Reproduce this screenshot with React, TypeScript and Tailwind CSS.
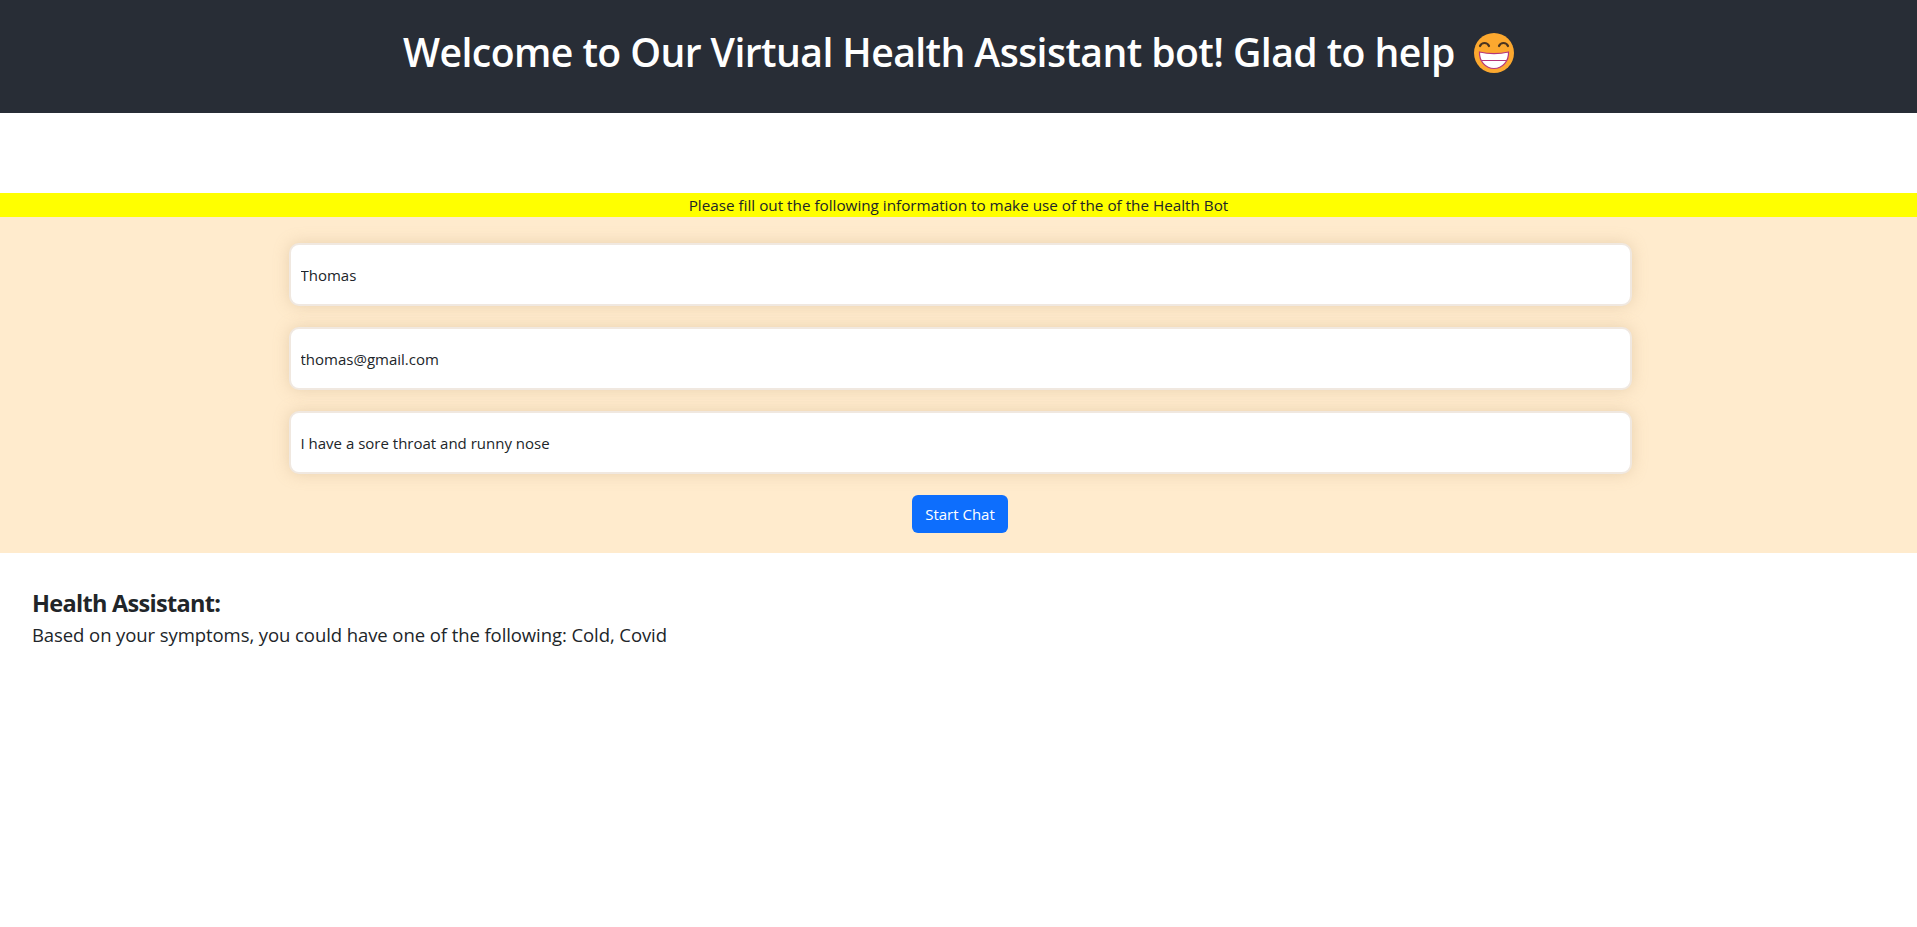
const fields = ['Thomas', 'thomas@gmail.com', 'I have a sore throat and runny nose'];

function GrinEmoji() {
  return (
    <svg viewBox="0 0 40 40" className="ml-[19px] h-10 w-10 shrink-0">
      <circle cx="20" cy="20" r="20" fill="#fca82f" />
      <path d="M6 13c1.800-4 7.200-4 9 0M25 13c1.800-4 7.200-4 9 0" fill="none" stroke="#4a3420" strokeWidth="2.200" strokeLinecap="round" />
      <path d="M5.500 19c9 2 20 2 29 0 .5 9-6 16.500-14.500 16.500S5 28 5.500 19z" fill="#fff" stroke="#b5367a" strokeWidth="1.200" />
      <path d="M8 27.500h24" stroke="#b5367a" strokeWidth="1" />
    </svg>
  );
}

export default function App() {
  return (
    <div className="min-h-[927px] bg-white font-['Open_Sans',sans-serif] text-[#212529]">
      <header className="flex h-[113px] items-center justify-center bg-[#282d36] pb-2">
        <h1 className="text-[39.200px] font-semibold tracking-[-0.6px] text-white">Welcome to Our Virtual Health Assistant bot! Glad to help</h1>
        <GrinEmoji />
      </header>

      <div className="mt-20 h-6 bg-[#ffff00] text-center text-[15.250px] leading-6">
        Please fill out the following information to make use of the of the Health Bot
      </div>

      <form className="flex h-[336px] flex-col items-center bg-[#ffebcd] pt-[26px] pl-[3px]">
        {fields.map((value) => (
          <input
            key={value}
            readOnly
            value={value}
            className="mb-[21px] h-[63px] w-[1343px] rounded-[10px] border-2 border-[#f0e8e0] bg-white px-[10px] text-[15px] text-[#212529] shadow-[0_0_15px_rgba(190,160,120,0.35)] outline-none"
          />
        ))}
        <button type="button" className="h-[38px] w-[96px] rounded-md bg-[#0d6efd] text-[15px] text-white">
          Start Chat
        </button>
      </form>

      <section className="px-8 pt-[35px]">
        <h2 className="text-[23.500px] leading-[30px] font-bold tracking-[-0.7px]">Health Assistant:</h2>
        <p className="mt-px text-[18.500px] leading-[32px] tracking-[-0.08px]">Based on your symptoms, you could have one of the following: Cold, Covid</p>
      </section>
    </div>
  );
}
